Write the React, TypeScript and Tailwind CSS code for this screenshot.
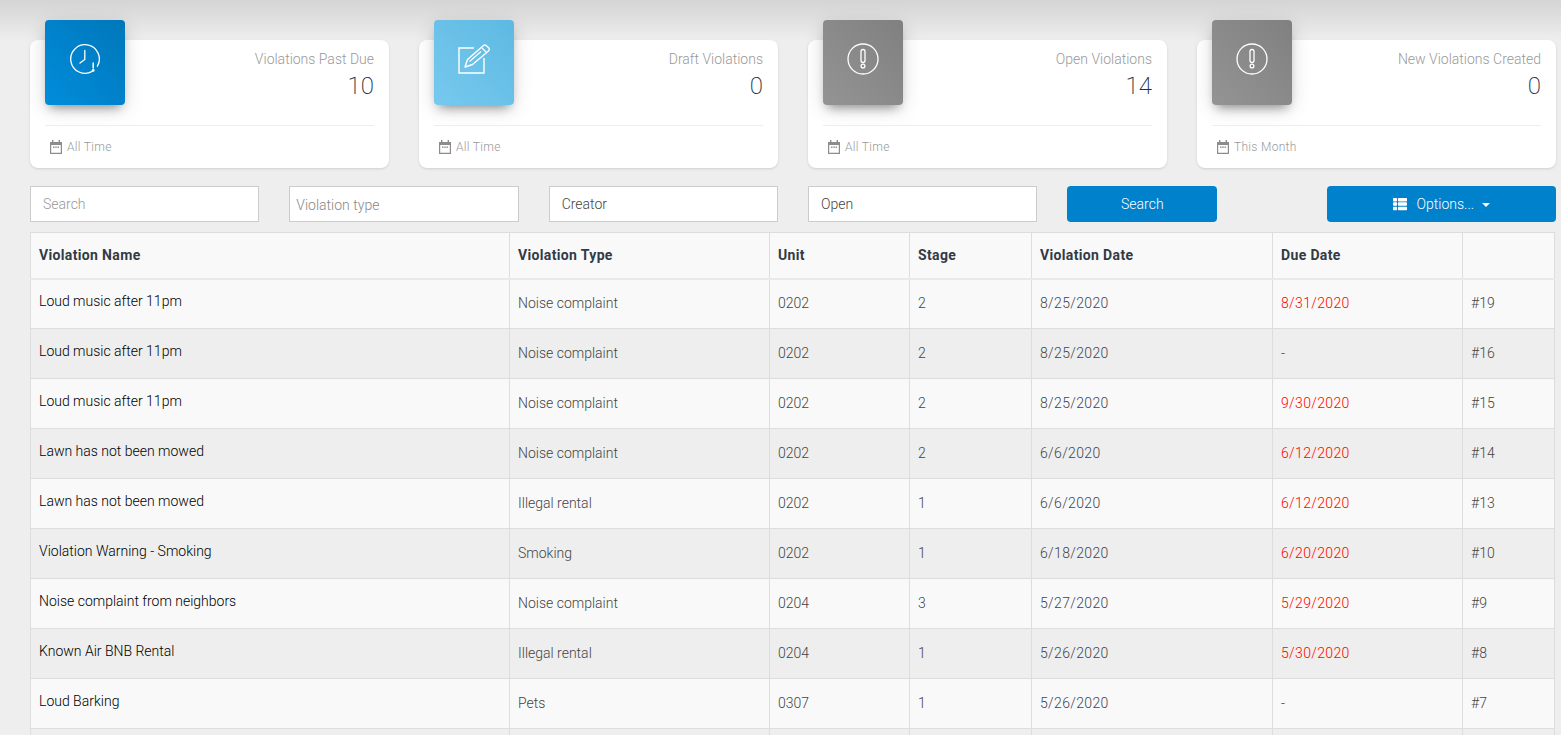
import { FaThList } from "react-icons/fa";

const stats = [
  { title: "Violations Past Due", value: "10", footer: "All Time", icon: "clock", color: "from-[#008ddb] to-[#0077ba]" },
  { title: "Draft Violations", value: "0", footer: "All Time", icon: "edit", color: "from-[#77c9ee] to-[#5db9e2]" },
  { title: "Open Violations", value: "14", footer: "All Time", icon: "alert", color: "from-[#949494] to-[#808080]" },
  { title: "New Violations Created", value: "0", footer: "This Month", icon: "alert", color: "from-[#949494] to-[#808080]" },
];

const rows = [
  { name: "Loud music after 11pm", type: "Noise complaint", unit: "0202", stage: "2", date: "8/25/2020", due: "8/31/2020", id: "#19" },
  { name: "Loud music after 11pm", type: "Noise complaint", unit: "0202", stage: "2", date: "8/25/2020", due: "-", id: "#16" },
  { name: "Loud music after 11pm", type: "Noise complaint", unit: "0202", stage: "2", date: "8/25/2020", due: "9/30/2020", id: "#15" },
  { name: "Lawn has not been mowed", type: "Noise complaint", unit: "0202", stage: "2", date: "6/6/2020", due: "6/12/2020", id: "#14" },
  { name: "Lawn has not been mowed", type: "Illegal rental", unit: "0202", stage: "1", date: "6/6/2020", due: "6/12/2020", id: "#13" },
  { name: "Violation Warning - Smoking", type: "Smoking", unit: "0202", stage: "1", date: "6/18/2020", due: "6/20/2020", id: "#10" },
  { name: "Noise complaint from neighbors", type: "Noise complaint", unit: "0204", stage: "3", date: "5/27/2020", due: "5/29/2020", id: "#9" },
  { name: "Known Air BNB Rental", type: "Illegal rental", unit: "0204", stage: "1", date: "5/26/2020", due: "5/30/2020", id: "#8" },
  { name: "Loud Barking", type: "Pets", unit: "0307", stage: "1", date: "5/26/2020", due: "-", id: "#7" },
];

function StatIcon({ name }: { name: string }) {
  if (name === "clock") {
    return (
      <svg viewBox="0 0 32 32" className="w-8 h-8" fill="none" stroke="white" strokeWidth="1.3" strokeLinecap="round">
        <path d="M28.4 23.2A14.3 14.3 0 1 0 23.2 28.4" />
        <path d="M15.8 7.5V16.5L11 20" />
        <path d="M24.2 20V25" strokeWidth="1.5" />
        <circle cx="24.2" cy="27.4" r="0.8" />
      </svg>
    );
  }
  if (name === "edit") {
    return (
      <svg viewBox="0 0 34 32" className="w-[34px] h-8" fill="none" stroke="white" strokeWidth="1.4">
        <path d="M17 5H2V30H27V15" />
        <path d="M8 24L10.5 16.5L26.5 2.5Q28 1.5 29.5 2.8L31.8 5Q33 6.5 31.5 8L15.5 21.5Z" strokeLinejoin="round" />
        <path d="M25 5L29.5 9.5M12.5 18.5L24 8.5" strokeWidth="1.1" />
      </svg>
    );
  }
  return (
    <svg viewBox="0 0 32 32" className="w-8 h-8" fill="none" stroke="white" strokeWidth="1.3">
      <circle cx="16" cy="16" r="15" />
      <rect x="14" y="6.5" width="4" height="13" rx="2" />
      <circle cx="16" cy="23" r="1.9" />
    </svg>
  );
}

function CalendarIcon() {
  return (
    <svg viewBox="0 0 12 14" className="w-3 h-3.5 text-[#8c8c8c] shrink-0" fill="currentColor">
      <rect x="2" y="0" width="1.4" height="3" />
      <rect x="8.6" y="0" width="1.4" height="3" />
      <path d="M0 2H12V14H0ZM1.2 5V12.8H10.8V5Z" fillRule="evenodd" />
      <rect x="3" y="6.5" width="1.5" height="1.4" />
      <rect x="5.25" y="6.5" width="1.5" height="1.4" />
      <rect x="7.5" y="6.5" width="1.5" height="1.4" />
    </svg>
  );
}

function StatCard({ title, value, footer, icon, color }: (typeof stats)[number]) {
  return (
    <div className="h-32 bg-white rounded-lg shadow-sm flex flex-col">
      <div className="flex justify-between px-3.75 pb-5">
        <div className={`-mt-5 w-20 h-[85px] rounded-sm bg-gradient-to-tr ${color} shadow-[0_4px_20px_0_rgba(0,0,0,0.14),0_7px_10px_-5px_rgba(0,0,0,0.4)] flex items-center justify-center pb-2`}>
          <StatIcon name={icon} />
        </div>
        <div className="pt-2.25 text-right">
          <p className="text-sm font-light text-[#999]">{title}</p>
          <p className="mt-px text-2xl leading-8 font-extralight text-[#222d3d]">{value}</p>
        </div>
      </div>
      <div className="mx-3.75 flex-1 border-t border-[#eee] flex items-center gap-1.25 pl-1.25 text-xs font-light tracking-wide text-[#999]">
        <CalendarIcon />
        <span>{footer}</span>
      </div>
    </div>
  );
}

export default function App() {
  return (
    <div className="h-screen overflow-hidden bg-[#eee] font-['Roboto',sans-serif]">
      <div className="h-10 bg-gradient-to-b from-[#d4d4d4] to-[#eee]" />

      <div className="pl-7.5 pr-1.25">
        <div className="grid grid-cols-4 gap-7.5">
          {stats.map((s) => (
            <StatCard key={s.title} {...s} />
          ))}
        </div>

        {/* Filters */}
        <div className="mt-4.5 grid grid-cols-6 gap-7.5">
          <input placeholder="Search" className="h-9 min-w-0 bg-white border border-[#ccc] px-3 text-sm font-light placeholder:text-[#999] outline-none" />
          <input placeholder="Violation type" className="h-9 min-w-0 bg-white border border-[#ccc] px-1.5 pt-0.5 text-sm font-light placeholder:text-[#888] outline-none" />
          <input defaultValue="Creator" className="h-9 min-w-0 bg-white border border-[#ccc] px-3 text-sm font-light text-[#444] outline-none" />
          <input defaultValue="Open" className="h-9 min-w-0 bg-white border border-[#ccc] px-3 text-sm font-light text-[#444] outline-none" />
          <button className="h-9 w-[150px] bg-[#0081cc] rounded-sm text-sm font-light text-white">Search</button>
          <button className="h-9 bg-[#0081cc] rounded-sm text-sm font-light text-white flex items-center justify-center">
            <FaThList className="w-3.5 h-3.5 mr-2.5" />
            Options...
            <span className="ml-2 mt-0.5 border-x-4 border-t-4 border-x-transparent border-t-white" />
          </button>
        </div>

        {/* Violations table */}
        <div className="mt-2.5 pr-px">
          <table className="w-full table-fixed border-collapse text-sm text-left">
            <colgroup>
              <col className="w-[479px]" />
              <col className="w-[260px]" />
              <col className="w-[140px]" />
              <col className="w-[122px]" />
              <col className="w-[241px]" />
              <col className="w-[190px]" />
              <col />
            </colgroup>
            <thead>
              <tr className="h-11.5 bg-[#f9f9f9] text-[#333a47]">
                {["Violation Name", "Violation Type", "Unit", "Stage", "Violation Date", "Due Date", ""].map((h) => (
                  <th key={h} className="border border-b-2 border-[#ddd] border-b-[#e9e9e9] px-2 font-bold tracking-wide">
                    {h}
                  </th>
                ))}
              </tr>
            </thead>
            <tbody className="font-light text-[#444]">
              {rows.map((r, i) => (
                <tr key={r.id} className={i % 2 === 0 ? "h-[50px] bg-[#f9f9f9]" : "h-[50px] bg-[#eee]"}>
                  <td className="border border-[#ddd] px-2 pb-1.5 text-black">{r.name}</td>
                  <td className="border border-[#ddd] px-2 pb-0.5">{r.type}</td>
                  <td className="border border-[#ddd] px-2 pb-0.5">{r.unit}</td>
                  <td className="border border-[#ddd] px-2 pb-0.5">{r.stage}</td>
                  <td className="border border-[#ddd] px-2 pb-0.5 tracking-wide">{r.date}</td>
                  <td className={r.due === "-" ? "border border-[#ddd] px-2 pb-0.5" : "border border-[#ddd] px-2 pb-0.5 tracking-wide text-[#f00]"}>{r.due}</td>
                  <td className="border border-[#ddd] px-2 pb-0.5">{r.id}</td>
                </tr>
              ))}
              <tr className="h-[50px] bg-[#eee]">
                {[0, 1, 2, 3, 4, 5, 6].map((c) => (
                  <td key={c} className="border border-[#ddd]" />
                ))}
              </tr>
            </tbody>
          </table>
        </div>
      </div>
    </div>
  );
}
